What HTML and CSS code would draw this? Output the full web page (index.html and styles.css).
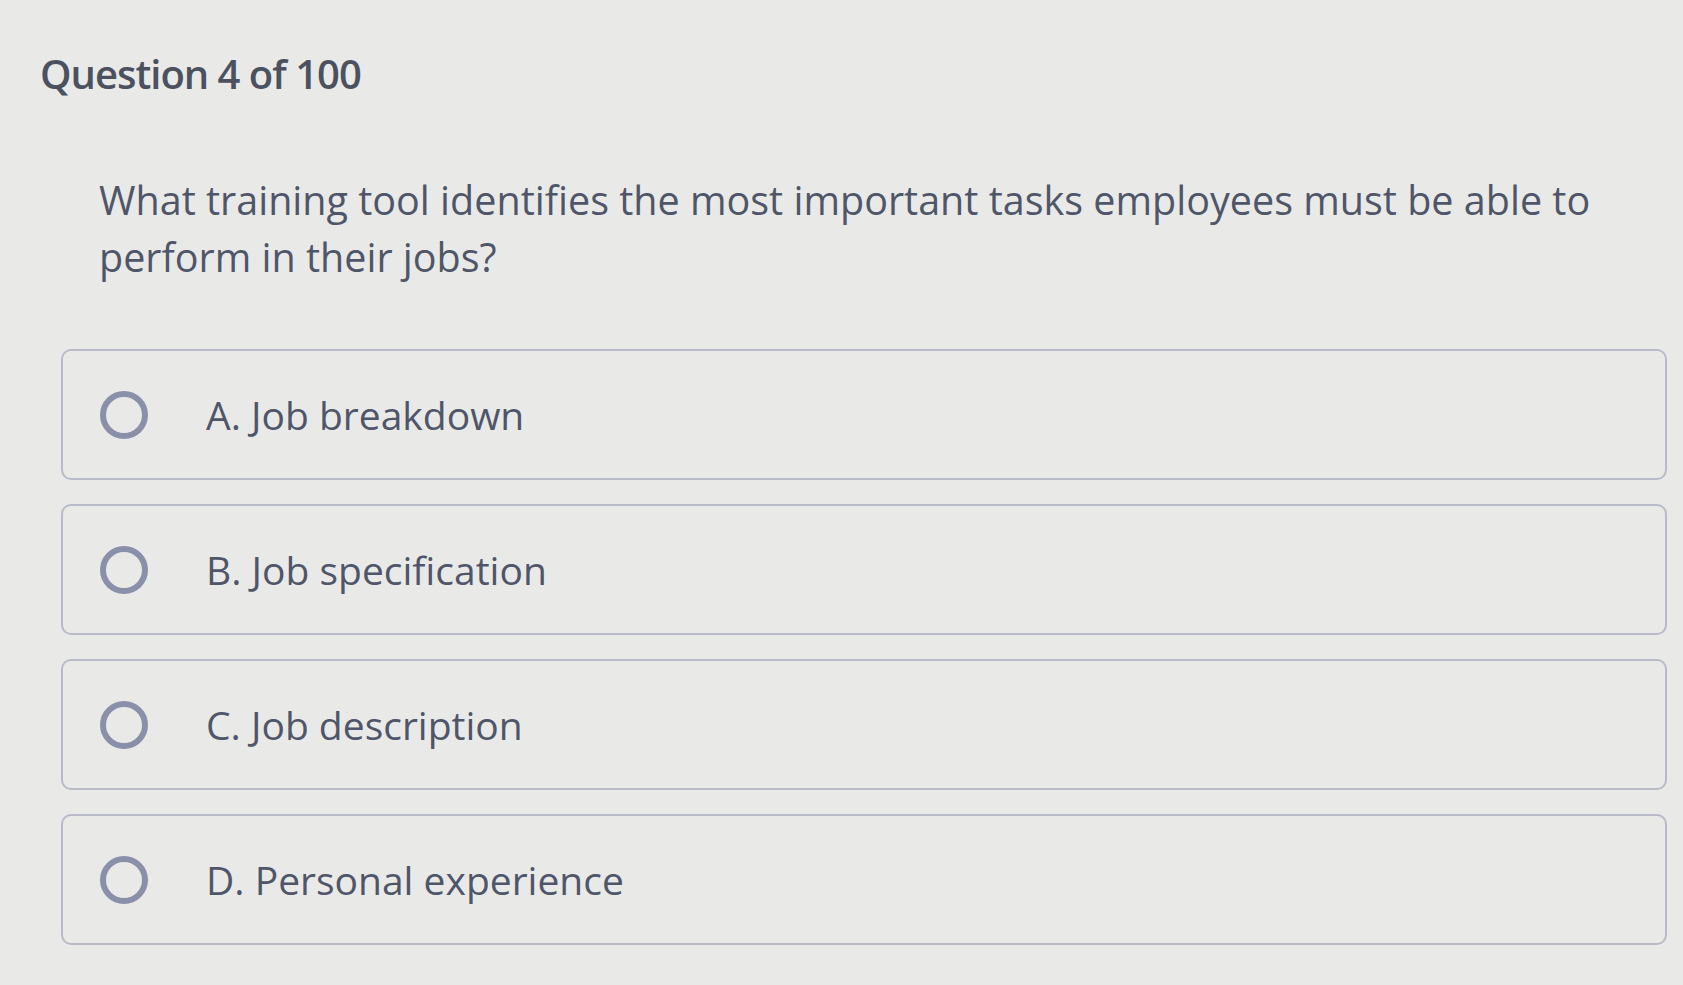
FILE: index.html
```html
<!DOCTYPE html>
<html>
<head>
	<meta charset="utf-8">
	<title>Question 4 of 100</title>
	<link rel="stylesheet" href="styles.css">
</head>
<body>
<div class="quiz">
	<h1 class="quiz-title">Question 4 of 100</h1>
	<p class="quiz-question">What training tool identifies the most important tasks employees must be able to perform in their jobs?</p>
	<ul class="answer-list">
		<li class="answer"><span class="radio"></span><span class="answer-text">A. Job breakdown</span></li>
		<li class="answer"><span class="radio"></span><span class="answer-text">B. Job specification</span></li>
		<li class="answer"><span class="radio"></span><span class="answer-text">C. Job description</span></li>
		<li class="answer"><span class="radio"></span><span class="answer-text">D. Personal experience</span></li>
	</ul>
</div>
</body>
</html>
```

FILE: styles.css
```css
body, p, ul, h1 {
	margin: 0
}

ul {
	padding-left: 0;
	list-style: none
}

body {
	background-color: #e9eae8;
	font-family: "Open Sans", "Liberation Sans", sans-serif;
	color: #4f5669;
}

.quiz {
	padding: 46px 16px 0 40px;
}

.quiz-title {
	font-size: 40px;
	font-weight: 600;
	line-height: 56px;
	color: #4c5160;
	letter-spacing: -1px;
}

.quiz-question {
	margin: 70px 0 0 59px;
	font-size: 39.5px;
	line-height: 57px;
	max-width: 1560px;
}

.answer-list {
	margin-top: 63px;
	margin-left: 21px;
	display: flex;
	flex-direction: column;
	gap: 24px;
}

.answer {
	height: 127px;
	border: 2px solid #b8bbc7;
	border-radius: 10px;
	display: flex;
	align-items: center;
	padding-left: 37px;
}

.radio {
	width: 36px;
	height: 36px;
	border: 6px solid #8b90aa;
	border-radius: 50%;
	flex-shrink: 0;
}

.answer-text {
	margin-left: 58px;
	font-size: 39px;
}
```
